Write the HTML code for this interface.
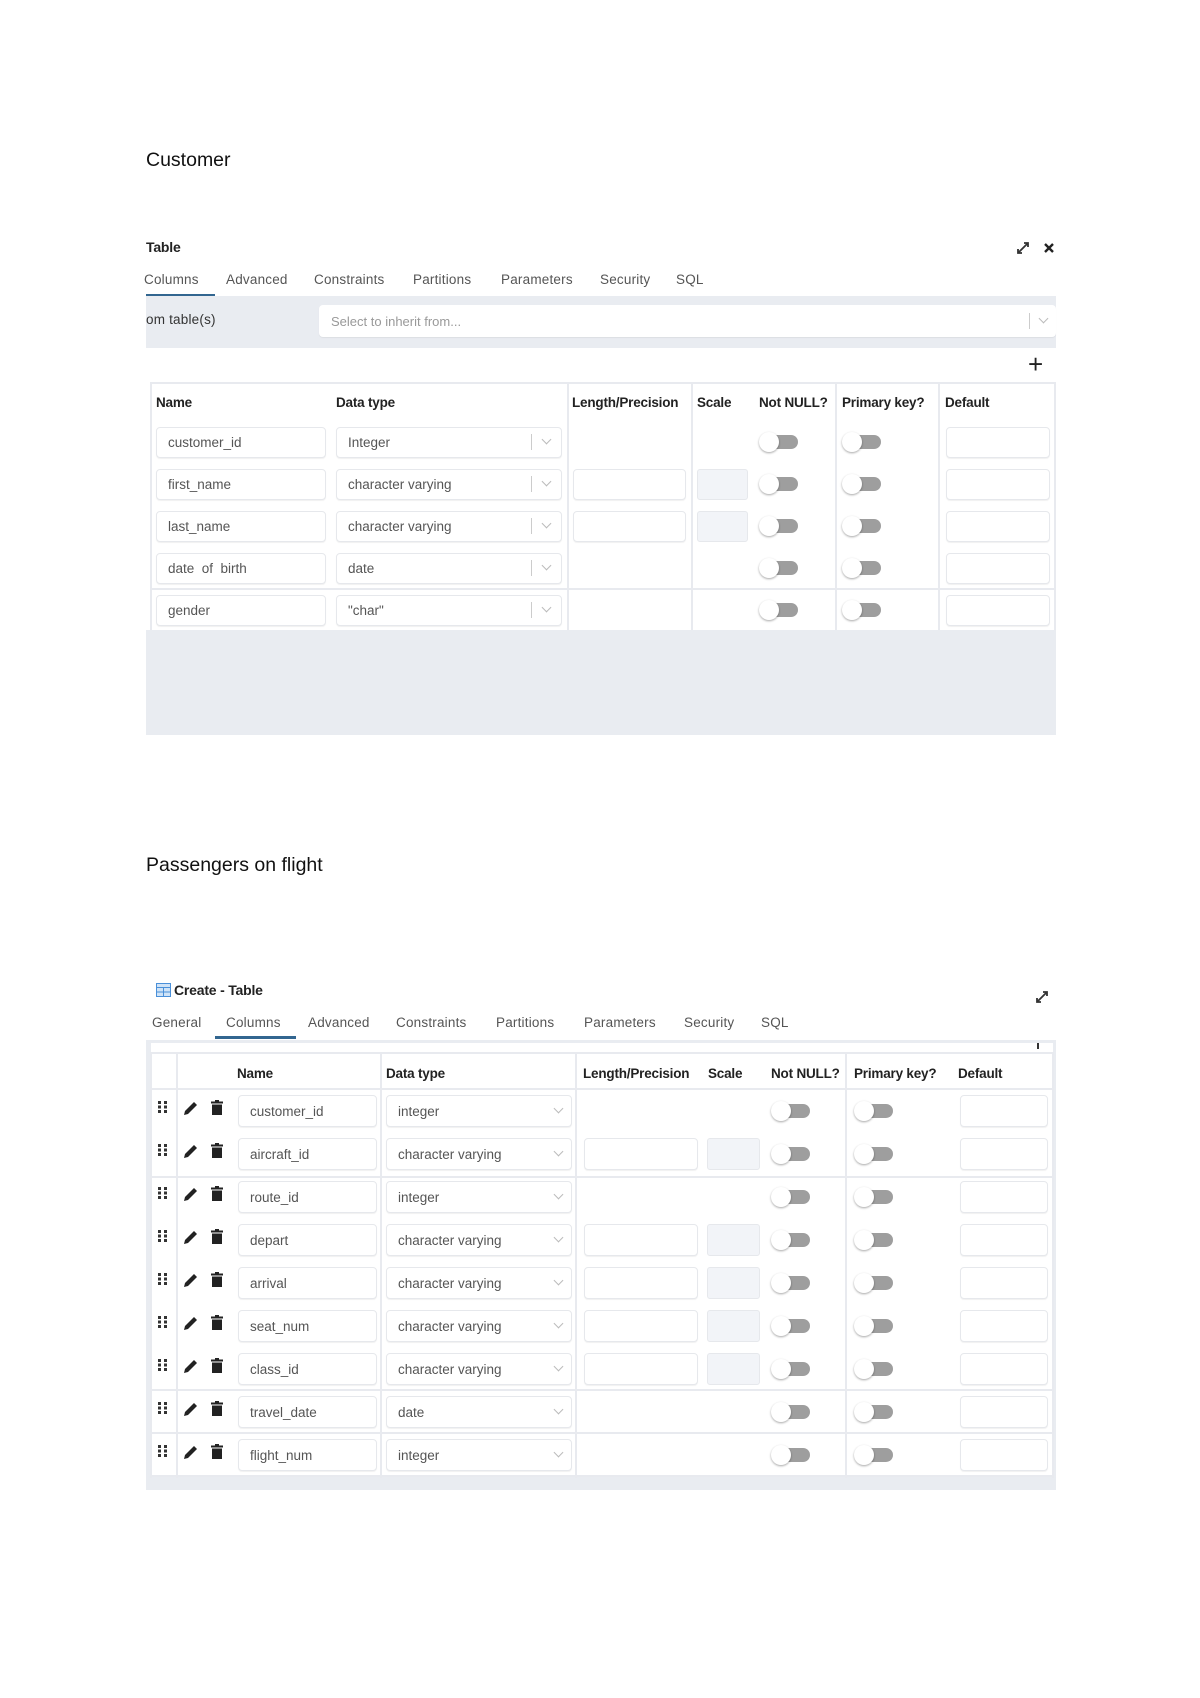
<!DOCTYPE html>
<html><head><meta charset="utf-8"><style>
*{box-sizing:border-box;margin:0;padding:0}
body{width:1200px;height:1698px;background:#fff;position:relative;font-family:"Liberation Sans",sans-serif;color:#222;overflow:hidden}
.a{position:absolute;white-space:nowrap}
.doc{font-size:19.5px;color:#111}
.t{font-size:13.5px;color:#555;letter-spacing:.2px}
.h{font-size:13.5px;color:#222;font-weight:bold;letter-spacing:-.2px}
.in{position:absolute;background:#fff;border:1px solid #e6e8ec;border-radius:4px;box-shadow:0 1px 1px rgba(0,0,0,.06);font-size:13.5px;color:#555;padding-left:11px;display:flex;align-items:center}
.gb{position:absolute;background:#f2f4f8;border:1px solid #e6e8ec;border-radius:3px}
.vl{position:absolute;width:2px;background:#e8eaef}
.hl{position:absolute;height:2px;background:#e8eaef}
.tg{position:absolute;width:40px;height:22px}
.tg:before{content:"";position:absolute;left:10px;top:4px;width:29px;height:14px;border-radius:7px;background:#9e9e9e}
.tg:after{content:"";position:absolute;left:0;top:1px;width:20px;height:20px;border-radius:50%;background:#fff;box-shadow:0 1px 2px rgba(0,0,0,.35)}
.chev{position:absolute;width:7px;height:7px;border-right:1.3px solid #bbb;border-bottom:1.3px solid #bbb;transform:rotate(45deg)}
.sep{position:absolute;width:1px;height:16px;background:#ccc}
</style></head><body>

<div class="a doc" style="left:146px;top:149px">Customer</div>

<!-- Panel 1 -->
<div class="a h" style="left:146px;top:239px;font-size:14px">Table</div>
<svg class="a" style="left:1016px;top:241px" width="14" height="14" viewBox="0 0 14 14"><path d="M2 12 L12 2 M8 2 H12 V6 M2 8 V12 H6" stroke="#333" stroke-width="1.8" fill="none"/></svg>
<svg class="a" style="left:1043px;top:242px" width="12" height="12" viewBox="0 0 12 12"><path d="M2 2 L10 10 M10 2 L2 10" stroke="#222" stroke-width="2.4"/></svg>
<div class="a t" style="left:144px;top:272px">Columns</div>
<div class="a t" style="left:226px;top:272px">Advanced</div>
<div class="a t" style="left:314px;top:272px">Constraints</div>
<div class="a t" style="left:413px;top:272px">Partitions</div>
<div class="a t" style="left:501px;top:272px">Parameters</div>
<div class="a t" style="left:600px;top:272px">Security</div>
<div class="a t" style="left:676px;top:272px">SQL</div>
<div class="a" style="left:146px;top:294px;width:69px;height:3px;background:#326690"></div>
<div class="a" style="left:146px;top:296px;width:910px;height:52px;background:#e9ecf1"></div>
<div class="a t" style="left:146px;top:312px;color:#333">om table(s)</div>
<div class="in" style="left:319px;top:305px;width:737px;height:32px;color:#999;font-size:13px;border-color:#fff">Select to inherit from...</div>
<div class="sep" style="left:1029px;top:313px"></div>
<div class="chev" style="left:1040px;top:315px"></div>
<div class="a" style="left:1028px;top:349px;font-size:26px;color:#222;font-weight:300">+</div>

<div class="hl" style="left:150px;top:382px;width:906px"></div>
<div class="vl" style="left:150px;top:382px;height:249px"></div>
<div class="vl" style="left:1054px;top:382px;height:249px"></div>
<div class="vl" style="left:567px;top:382px;height:249px"></div>
<div class="vl" style="left:691px;top:382px;height:249px"></div>
<div class="vl" style="left:835px;top:382px;height:249px"></div>
<div class="vl" style="left:938px;top:382px;height:249px"></div>
<div class="hl" style="left:150px;top:588px;width:906px"></div>
<div class="a" style="left:146px;top:630px;width:910px;height:105px;background:#e9ecf1"></div>
<div class="a h" style="left:156px;top:395px">Name</div>
<div class="a h" style="left:336px;top:395px">Data type</div>
<div class="a h" style="left:572px;top:395px">Length/Precision</div>
<div class="a h" style="left:697px;top:395px">Scale</div>
<div class="a h" style="left:759px;top:395px">Not NULL?</div>
<div class="a h" style="left:842px;top:395px">Primary key?</div>
<div class="a h" style="left:945px;top:395px">Default</div>

<div class="in" style="left:156px;top:427px;width:170px;height:31px">customer_id</div>
<div class="in" style="left:336px;top:427px;width:226px;height:31px">Integer</div>
<div class="sep" style="left:531px;top:434px"></div><div class="chev" style="left:543px;top:436px"></div>
<div class="tg" style="left:759px;top:431px"></div><div class="tg" style="left:842px;top:431px"></div>
<div class="in" style="left:946px;top:427px;width:104px;height:31px"></div>

<div class="in" style="left:156px;top:469px;width:170px;height:31px">first_name</div>
<div class="in" style="left:336px;top:469px;width:226px;height:31px">character varying</div>
<div class="sep" style="left:531px;top:476px"></div><div class="chev" style="left:543px;top:478px"></div>
<div class="in" style="left:573px;top:469px;width:113px;height:31px"></div>
<div class="gb" style="left:697px;top:469px;width:51px;height:31px"></div>
<div class="tg" style="left:759px;top:473px"></div><div class="tg" style="left:842px;top:473px"></div>
<div class="in" style="left:946px;top:469px;width:104px;height:31px"></div>

<div class="in" style="left:156px;top:511px;width:170px;height:31px">last_name</div>
<div class="in" style="left:336px;top:511px;width:226px;height:31px">character varying</div>
<div class="sep" style="left:531px;top:518px"></div><div class="chev" style="left:543px;top:520px"></div>
<div class="in" style="left:573px;top:511px;width:113px;height:31px"></div>
<div class="gb" style="left:697px;top:511px;width:51px;height:31px"></div>
<div class="tg" style="left:759px;top:515px"></div><div class="tg" style="left:842px;top:515px"></div>
<div class="in" style="left:946px;top:511px;width:104px;height:31px"></div>

<div class="in" style="left:156px;top:553px;width:170px;height:31px">date&nbsp; of&nbsp; birth</div>
<div class="in" style="left:336px;top:553px;width:226px;height:31px">date</div>
<div class="sep" style="left:531px;top:560px"></div><div class="chev" style="left:543px;top:562px"></div>
<div class="tg" style="left:759px;top:557px"></div><div class="tg" style="left:842px;top:557px"></div>
<div class="in" style="left:946px;top:553px;width:104px;height:31px"></div>

<div class="in" style="left:156px;top:595px;width:170px;height:31px">gender</div>
<div class="in" style="left:336px;top:595px;width:226px;height:31px">"char"</div>
<div class="sep" style="left:531px;top:602px"></div><div class="chev" style="left:543px;top:604px"></div>
<div class="tg" style="left:759px;top:599px"></div><div class="tg" style="left:842px;top:599px"></div>
<div class="in" style="left:946px;top:595px;width:104px;height:31px"></div>

<div class="a doc" style="left:146px;top:854px">Passengers on flight</div>

<!-- Panel 2 -->
<svg class="a" style="left:156px;top:983px" width="15" height="14" viewBox="0 0 15 14"><rect x="0.5" y="0.5" width="14" height="13" fill="#cfe3f7" stroke="#4a90d9"/><path d="M0.5 4.5 H14.5 M0.5 9 H14.5 M7.5 4.5 V13.5" stroke="#4a90d9"/></svg>
<div class="a h" style="left:174px;top:982px;font-size:14px">Create - Table</div>
<svg class="a" style="left:1035px;top:990px" width="14" height="14" viewBox="0 0 14 14"><path d="M2 12 L12 2 M8 2 H12 V6 M2 8 V12 H6" stroke="#333" stroke-width="1.8" fill="none"/></svg>
<div class="a t" style="left:152px;top:1015px">General</div>
<div class="a t" style="left:226px;top:1015px">Columns</div>
<div class="a t" style="left:308px;top:1015px">Advanced</div>
<div class="a t" style="left:396px;top:1015px">Constraints</div>
<div class="a t" style="left:496px;top:1015px">Partitions</div>
<div class="a t" style="left:584px;top:1015px">Parameters</div>
<div class="a t" style="left:684px;top:1015px">Security</div>
<div class="a t" style="left:761px;top:1015px">SQL</div>
<div class="a" style="left:215px;top:1036px;width:81px;height:3px;background:#326690"></div>
<div class="a" style="left:146px;top:1040px;width:910px;height:450px;background:#e9ecf1"></div>
<div class="a" style="left:151px;top:1043px;width:902px;height:434px;background:#fff"></div>
<div class="a" style="left:1037px;top:1043px;width:2px;height:6px;background:#333"></div>
<div class="hl" style="left:150px;top:1052px;width:904px"></div>
<div class="hl" style="left:150px;top:1088px;width:904px"></div>
<div class="vl" style="left:150px;top:1052px;height:426px"></div>
<div class="vl" style="left:1052px;top:1052px;height:426px"></div>
<div class="vl" style="left:176px;top:1052px;height:426px"></div>
<div class="vl" style="left:380px;top:1052px;height:426px"></div>
<div class="vl" style="left:575px;top:1052px;height:426px"></div>
<div class="vl" style="left:845px;top:1052px;height:426px"></div>
<div class="hl" style="left:150px;top:1176px;width:904px"></div>
<div class="hl" style="left:150px;top:1389px;width:904px"></div>
<div class="hl" style="left:150px;top:1432px;width:904px"></div>
<div class="hl" style="left:150px;top:1475px;width:904px"></div>
<div class="a h" style="left:237px;top:1066px">Name</div>
<div class="a h" style="left:386px;top:1066px">Data type</div>
<div class="a h" style="left:583px;top:1066px">Length/Precision</div>
<div class="a h" style="left:708px;top:1066px">Scale</div>
<div class="a h" style="left:771px;top:1066px">Not NULL?</div>
<div class="a h" style="left:854px;top:1066px">Primary key?</div>
<div class="a h" style="left:958px;top:1066px">Default</div>

<div class="a" style="left:0;top:1089px;width:1200px;height:43px">
 <svg class="a" style="left:158px;top:12px" width="10" height="12" viewBox="0 0 10 12"><g fill="#333"><rect x="0" y="0" width="3" height="3"/><rect x="6" y="0" width="3" height="3"/><rect x="0" y="4.5" width="3" height="3"/><rect x="6" y="4.5" width="3" height="3"/><rect x="0" y="9" width="3" height="3"/><rect x="6" y="9" width="3" height="3"/></g></svg>
 <svg class="a" style="left:183px;top:11px" width="16" height="16" viewBox="0 0 16 16"><path d="M1 15 L2 11 L11 2 L14 5 L5 14 Z" fill="#222"/></svg>
 <svg class="a" style="left:211px;top:11px" width="12" height="15" viewBox="0 0 12 15"><path d="M0 1.5 H12 V3.5 H0 Z M4 0 H8 V1.5 H4 Z M1 4.5 H11 V15 H1 Z" fill="#222"/></svg>
 <div class="in" style="left:238px;top:6px;width:139px;height:32px">customer_id</div>
 <div class="in" style="left:386px;top:6px;width:186px;height:32px">integer</div><div class="chev" style="left:555px;top:16px"></div>
 <div class="tg" style="left:771px;top:11px"></div><div class="tg" style="left:854px;top:11px"></div>
 <div class="in" style="left:960px;top:6px;width:88px;height:32px"></div>
</div>
<div class="a" style="left:0;top:1132px;width:1200px;height:43px">
 <svg class="a" style="left:158px;top:12px" width="10" height="12" viewBox="0 0 10 12"><g fill="#333"><rect x="0" y="0" width="3" height="3"/><rect x="6" y="0" width="3" height="3"/><rect x="0" y="4.5" width="3" height="3"/><rect x="6" y="4.5" width="3" height="3"/><rect x="0" y="9" width="3" height="3"/><rect x="6" y="9" width="3" height="3"/></g></svg>
 <svg class="a" style="left:183px;top:11px" width="16" height="16" viewBox="0 0 16 16"><path d="M1 15 L2 11 L11 2 L14 5 L5 14 Z" fill="#222"/></svg>
 <svg class="a" style="left:211px;top:11px" width="12" height="15" viewBox="0 0 12 15"><path d="M0 1.5 H12 V3.5 H0 Z M4 0 H8 V1.5 H4 Z M1 4.5 H11 V15 H1 Z" fill="#222"/></svg>
 <div class="in" style="left:238px;top:6px;width:139px;height:32px">aircraft_id</div>
 <div class="in" style="left:386px;top:6px;width:186px;height:32px">character varying</div><div class="chev" style="left:555px;top:16px"></div>
 <div class="in" style="left:584px;top:6px;width:114px;height:32px"></div><div class="gb" style="left:707px;top:6px;width:53px;height:32px"></div>
 <div class="tg" style="left:771px;top:11px"></div><div class="tg" style="left:854px;top:11px"></div>
 <div class="in" style="left:960px;top:6px;width:88px;height:32px"></div>
</div>
<div class="a" style="left:0;top:1175px;width:1200px;height:43px">
 <svg class="a" style="left:158px;top:12px" width="10" height="12" viewBox="0 0 10 12"><g fill="#333"><rect x="0" y="0" width="3" height="3"/><rect x="6" y="0" width="3" height="3"/><rect x="0" y="4.5" width="3" height="3"/><rect x="6" y="4.5" width="3" height="3"/><rect x="0" y="9" width="3" height="3"/><rect x="6" y="9" width="3" height="3"/></g></svg>
 <svg class="a" style="left:183px;top:11px" width="16" height="16" viewBox="0 0 16 16"><path d="M1 15 L2 11 L11 2 L14 5 L5 14 Z" fill="#222"/></svg>
 <svg class="a" style="left:211px;top:11px" width="12" height="15" viewBox="0 0 12 15"><path d="M0 1.5 H12 V3.5 H0 Z M4 0 H8 V1.5 H4 Z M1 4.5 H11 V15 H1 Z" fill="#222"/></svg>
 <div class="in" style="left:238px;top:6px;width:139px;height:32px">route_id</div>
 <div class="in" style="left:386px;top:6px;width:186px;height:32px">integer</div><div class="chev" style="left:555px;top:16px"></div>
 <div class="tg" style="left:771px;top:11px"></div><div class="tg" style="left:854px;top:11px"></div>
 <div class="in" style="left:960px;top:6px;width:88px;height:32px"></div>
</div>
<div class="a" style="left:0;top:1218px;width:1200px;height:43px">
 <svg class="a" style="left:158px;top:12px" width="10" height="12" viewBox="0 0 10 12"><g fill="#333"><rect x="0" y="0" width="3" height="3"/><rect x="6" y="0" width="3" height="3"/><rect x="0" y="4.5" width="3" height="3"/><rect x="6" y="4.5" width="3" height="3"/><rect x="0" y="9" width="3" height="3"/><rect x="6" y="9" width="3" height="3"/></g></svg>
 <svg class="a" style="left:183px;top:11px" width="16" height="16" viewBox="0 0 16 16"><path d="M1 15 L2 11 L11 2 L14 5 L5 14 Z" fill="#222"/></svg>
 <svg class="a" style="left:211px;top:11px" width="12" height="15" viewBox="0 0 12 15"><path d="M0 1.5 H12 V3.5 H0 Z M4 0 H8 V1.5 H4 Z M1 4.5 H11 V15 H1 Z" fill="#222"/></svg>
 <div class="in" style="left:238px;top:6px;width:139px;height:32px">depart</div>
 <div class="in" style="left:386px;top:6px;width:186px;height:32px">character varying</div><div class="chev" style="left:555px;top:16px"></div>
 <div class="in" style="left:584px;top:6px;width:114px;height:32px"></div><div class="gb" style="left:707px;top:6px;width:53px;height:32px"></div>
 <div class="tg" style="left:771px;top:11px"></div><div class="tg" style="left:854px;top:11px"></div>
 <div class="in" style="left:960px;top:6px;width:88px;height:32px"></div>
</div>
<div class="a" style="left:0;top:1261px;width:1200px;height:43px">
 <svg class="a" style="left:158px;top:12px" width="10" height="12" viewBox="0 0 10 12"><g fill="#333"><rect x="0" y="0" width="3" height="3"/><rect x="6" y="0" width="3" height="3"/><rect x="0" y="4.5" width="3" height="3"/><rect x="6" y="4.5" width="3" height="3"/><rect x="0" y="9" width="3" height="3"/><rect x="6" y="9" width="3" height="3"/></g></svg>
 <svg class="a" style="left:183px;top:11px" width="16" height="16" viewBox="0 0 16 16"><path d="M1 15 L2 11 L11 2 L14 5 L5 14 Z" fill="#222"/></svg>
 <svg class="a" style="left:211px;top:11px" width="12" height="15" viewBox="0 0 12 15"><path d="M0 1.5 H12 V3.5 H0 Z M4 0 H8 V1.5 H4 Z M1 4.5 H11 V15 H1 Z" fill="#222"/></svg>
 <div class="in" style="left:238px;top:6px;width:139px;height:32px">arrival</div>
 <div class="in" style="left:386px;top:6px;width:186px;height:32px">character varying</div><div class="chev" style="left:555px;top:16px"></div>
 <div class="in" style="left:584px;top:6px;width:114px;height:32px"></div><div class="gb" style="left:707px;top:6px;width:53px;height:32px"></div>
 <div class="tg" style="left:771px;top:11px"></div><div class="tg" style="left:854px;top:11px"></div>
 <div class="in" style="left:960px;top:6px;width:88px;height:32px"></div>
</div>
<div class="a" style="left:0;top:1304px;width:1200px;height:43px">
 <svg class="a" style="left:158px;top:12px" width="10" height="12" viewBox="0 0 10 12"><g fill="#333"><rect x="0" y="0" width="3" height="3"/><rect x="6" y="0" width="3" height="3"/><rect x="0" y="4.5" width="3" height="3"/><rect x="6" y="4.5" width="3" height="3"/><rect x="0" y="9" width="3" height="3"/><rect x="6" y="9" width="3" height="3"/></g></svg>
 <svg class="a" style="left:183px;top:11px" width="16" height="16" viewBox="0 0 16 16"><path d="M1 15 L2 11 L11 2 L14 5 L5 14 Z" fill="#222"/></svg>
 <svg class="a" style="left:211px;top:11px" width="12" height="15" viewBox="0 0 12 15"><path d="M0 1.5 H12 V3.5 H0 Z M4 0 H8 V1.5 H4 Z M1 4.5 H11 V15 H1 Z" fill="#222"/></svg>
 <div class="in" style="left:238px;top:6px;width:139px;height:32px">seat_num</div>
 <div class="in" style="left:386px;top:6px;width:186px;height:32px">character varying</div><div class="chev" style="left:555px;top:16px"></div>
 <div class="in" style="left:584px;top:6px;width:114px;height:32px"></div><div class="gb" style="left:707px;top:6px;width:53px;height:32px"></div>
 <div class="tg" style="left:771px;top:11px"></div><div class="tg" style="left:854px;top:11px"></div>
 <div class="in" style="left:960px;top:6px;width:88px;height:32px"></div>
</div>
<div class="a" style="left:0;top:1347px;width:1200px;height:43px">
 <svg class="a" style="left:158px;top:12px" width="10" height="12" viewBox="0 0 10 12"><g fill="#333"><rect x="0" y="0" width="3" height="3"/><rect x="6" y="0" width="3" height="3"/><rect x="0" y="4.5" width="3" height="3"/><rect x="6" y="4.5" width="3" height="3"/><rect x="0" y="9" width="3" height="3"/><rect x="6" y="9" width="3" height="3"/></g></svg>
 <svg class="a" style="left:183px;top:11px" width="16" height="16" viewBox="0 0 16 16"><path d="M1 15 L2 11 L11 2 L14 5 L5 14 Z" fill="#222"/></svg>
 <svg class="a" style="left:211px;top:11px" width="12" height="15" viewBox="0 0 12 15"><path d="M0 1.5 H12 V3.5 H0 Z M4 0 H8 V1.5 H4 Z M1 4.5 H11 V15 H1 Z" fill="#222"/></svg>
 <div class="in" style="left:238px;top:6px;width:139px;height:32px">class_id</div>
 <div class="in" style="left:386px;top:6px;width:186px;height:32px">character varying</div><div class="chev" style="left:555px;top:16px"></div>
 <div class="in" style="left:584px;top:6px;width:114px;height:32px"></div><div class="gb" style="left:707px;top:6px;width:53px;height:32px"></div>
 <div class="tg" style="left:771px;top:11px"></div><div class="tg" style="left:854px;top:11px"></div>
 <div class="in" style="left:960px;top:6px;width:88px;height:32px"></div>
</div>
<div class="a" style="left:0;top:1390px;width:1200px;height:43px">
 <svg class="a" style="left:158px;top:12px" width="10" height="12" viewBox="0 0 10 12"><g fill="#333"><rect x="0" y="0" width="3" height="3"/><rect x="6" y="0" width="3" height="3"/><rect x="0" y="4.5" width="3" height="3"/><rect x="6" y="4.5" width="3" height="3"/><rect x="0" y="9" width="3" height="3"/><rect x="6" y="9" width="3" height="3"/></g></svg>
 <svg class="a" style="left:183px;top:11px" width="16" height="16" viewBox="0 0 16 16"><path d="M1 15 L2 11 L11 2 L14 5 L5 14 Z" fill="#222"/></svg>
 <svg class="a" style="left:211px;top:11px" width="12" height="15" viewBox="0 0 12 15"><path d="M0 1.5 H12 V3.5 H0 Z M4 0 H8 V1.5 H4 Z M1 4.5 H11 V15 H1 Z" fill="#222"/></svg>
 <div class="in" style="left:238px;top:6px;width:139px;height:32px">travel_date</div>
 <div class="in" style="left:386px;top:6px;width:186px;height:32px">date</div><div class="chev" style="left:555px;top:16px"></div>
 <div class="tg" style="left:771px;top:11px"></div><div class="tg" style="left:854px;top:11px"></div>
 <div class="in" style="left:960px;top:6px;width:88px;height:32px"></div>
</div>
<div class="a" style="left:0;top:1433px;width:1200px;height:43px">
 <svg class="a" style="left:158px;top:12px" width="10" height="12" viewBox="0 0 10 12"><g fill="#333"><rect x="0" y="0" width="3" height="3"/><rect x="6" y="0" width="3" height="3"/><rect x="0" y="4.5" width="3" height="3"/><rect x="6" y="4.5" width="3" height="3"/><rect x="0" y="9" width="3" height="3"/><rect x="6" y="9" width="3" height="3"/></g></svg>
 <svg class="a" style="left:183px;top:11px" width="16" height="16" viewBox="0 0 16 16"><path d="M1 15 L2 11 L11 2 L14 5 L5 14 Z" fill="#222"/></svg>
 <svg class="a" style="left:211px;top:11px" width="12" height="15" viewBox="0 0 12 15"><path d="M0 1.5 H12 V3.5 H0 Z M4 0 H8 V1.5 H4 Z M1 4.5 H11 V15 H1 Z" fill="#222"/></svg>
 <div class="in" style="left:238px;top:6px;width:139px;height:32px">flight_num</div>
 <div class="in" style="left:386px;top:6px;width:186px;height:32px">integer</div><div class="chev" style="left:555px;top:16px"></div>
 <div class="tg" style="left:771px;top:11px"></div><div class="tg" style="left:854px;top:11px"></div>
 <div class="in" style="left:960px;top:6px;width:88px;height:32px"></div>
</div>

</body></html>
